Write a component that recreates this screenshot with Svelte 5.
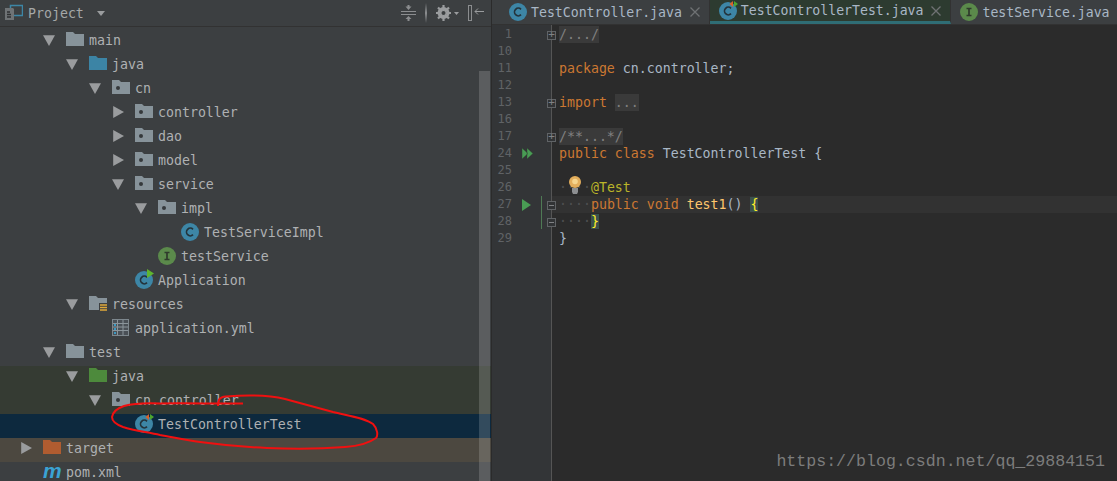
<script>
    const tree = [
        { depth: 1, arrow: 'down', icon: 'folder', label: 'main' },
        { depth: 2, arrow: 'down', icon: 'src', label: 'java' },
        { depth: 3, arrow: 'down', icon: 'pkg', label: 'cn' },
        { depth: 4, arrow: 'right', icon: 'pkg', label: 'controller' },
        { depth: 4, arrow: 'right', icon: 'pkg', label: 'dao' },
        { depth: 4, arrow: 'right', icon: 'pkg', label: 'model' },
        { depth: 4, arrow: 'down', icon: 'pkg', label: 'service' },
        { depth: 5, arrow: 'down', icon: 'pkg', label: 'impl' },
        { depth: 6, icon: 'class', label: 'TestServiceImpl' },
        { depth: 5, icon: 'iface', label: 'testService' },
        { depth: 4, icon: 'app', label: 'Application' },
        { depth: 2, arrow: 'down', icon: 'res', label: 'resources' },
        { depth: 3, icon: 'yml', label: 'application.yml' },
        { depth: 1, arrow: 'down', icon: 'folder', label: 'test' },
        { depth: 2, arrow: 'down', icon: 'testsrc', label: 'java', kind: 'tests' },
        { depth: 3, arrow: 'down', icon: 'pkg', label: 'cn.controller', kind: 'tests' },
        { depth: 4, icon: 'test', label: 'TestControllerTest', kind: 'selected' },
        { depth: 0, arrow: 'right', icon: 'target', label: 'target', kind: 'excluded' },
        { depth: 0, icon: 'pom', label: 'pom.xml' }
    ];

    const tabs = [
        { icon: 'class', name: 'TestController.java', close: true },
        { icon: 'test', name: 'TestControllerTest.java', close: true, active: true },
        { icon: 'iface', name: 'testService.java' }
    ];
</script>

{#snippet folderShape(color)}
    <path d="M0 1h7l2 2h9v12H0z" fill={color} />
{/snippet}

{#snippet classBadge(letter)}
    <circle cx="9" cy="9" r="9" fill={letter === 'I' ? '#5b8a4b' : '#3d86a6'} />
    {#if letter === 'I'}
        <path d="M6.5 5.5h5M6.5 12.5h5M9 5.5v7" stroke="#2f3a2c" stroke-width="1.7" fill="none" />
    {:else}
        <path d="M12 6.3a3.8 3.8 0 1 0 0 5.4" stroke="#24333b" stroke-width="1.7" fill="none" />
    {/if}
{/snippet}

{#snippet icon(name)}
    <svg class="icon" width="18" height="18" viewBox="0 0 18 18">
        {#if name === 'folder'}
            {@render folderShape('#87939a')}
        {:else if name === 'src'}
            {@render folderShape('#3c84a5')}
        {:else if name === 'testsrc'}
            {@render folderShape('#4d8a3c')}
        {:else if name === 'target'}
            {@render folderShape('#b05c30')}
        {:else if name === 'pkg'}
            {@render folderShape('#87939a')}
            <circle cx="6" cy="9" r="2" fill="#35393b" />
        {:else if name === 'res'}
            {@render folderShape('#87939a')}
            <rect x="10" y="8" width="9" height="10" fill="#3c3f41" />
            <path d="M11 10h7M11 12.5h7M11 15h7" stroke="#e0a93a" stroke-width="1.3" />
        {:else if name === 'class'}
            {@render classBadge('C')}
        {:else if name === 'iface'}
            {@render classBadge('I')}
        {:else if name === 'app'}
            {@render classBadge('C')}
            <path d="M12 -2l7 4.500-7 4.500z" fill="#5fb52f" />
        {:else if name === 'test'}
            {@render classBadge('C')}
            <path d="M14 -1v6l-3.500-3z" fill="#d9622b" />
            <path d="M15 -1v6l4-3z" fill="#4ea52f" />
        {:else if name === 'yml'}
            <rect x="0.5" y="0.5" width="16" height="16" fill="#4a5056" stroke="#7d878d" />
            <path d="M5.5 1v15M11 1v15M1 4.5h15M1 8h15M1 11.5h15" stroke="#8b959b" />
            <path d="M3 5v2M3 9v2M3 13v2" stroke="#3d9ac2" stroke-width="2" />
        {/if}
    </svg>
{/snippet}

<div class="ide">
    <aside class="project">
        <header class="project-bar">
            <svg class="project-icon" width="18" height="18" viewBox="0 0 18 18">
                <rect x="5.5" y="1.5" width="12" height="10" fill="none" stroke="#3d86a6" stroke-width="1.5" />
                <path d="M0 4h8l1 1v11H0z" fill="#6f7376" />
                <path d="M2 8h3M2 10.5h4M2 13h4" stroke="#2f3133" stroke-width="1.4" />
            </svg>
            <span class="project-title">Project</span>
            <svg class="caret" width="8" height="5" viewBox="0 0 8 5"><path d="M0 0h8L4 5z" fill="#9a9c9e" /></svg>
            <div class="bar-tools">
                <svg width="15" height="16" viewBox="0 0 15 16">
                    <path d="M0 6.5h15M0 9.5h15" stroke="#8b8d8f" />
                    <path d="M7.5 5l-3-3.5h2V0h2v1.500h2zM7.500 11l-3 3h2v2h2v-2h2z" fill="#8b8d8f" />
                </svg>
                <span class="tool-sep"></span>
                <svg width="24" height="16" viewBox="0 0 24 16">
                    <circle cx="7.500" cy="8" r="4.500" fill="none" stroke="#9a9c9e" stroke-width="3" />
                    <path d="M7.500 0v16M0 8h15M2 2.500l11 11M13 2.500L2 13.500" stroke="#9a9c9e" stroke-width="2.200" />
                    <circle cx="7.500" cy="8" r="2" fill="#3c3f41" />
                    <path d="M18 7h5l-2.500 3z" fill="#9a9c9e" />
                </svg>
                <svg width="16" height="16" viewBox="0 0 16 16">
                    <rect x="0.500" y="0.500" width="3" height="15" fill="none" stroke="#8b8d8f" />
                    <path d="M7 6.500h9M7 6.500l3-3M7 6.500l3 3" stroke="#9a9c9e" fill="none" />
                </svg>
            </div>
        </header>
        <ul class="tree">
            {#each tree as row}
                <li class="row {row.kind ?? ''}" style="padding-left: {20 + row.depth * 23}px">
                    <span class="arrow {row.arrow ?? ''}"></span>
                    {#if row.icon === 'pom'}
                        <span class="pom-m">m</span>
                    {:else}
                        {@render icon(row.icon)}
                    {/if}
                    <span class="label">{row.label}</span>
                </li>
            {/each}
        </ul>
        <div class="scrollbar"></div>
    </aside>

    <main class="editor">
        <nav class="tabs">
            {#each tabs as tab}
                <div class="tab" class:active={tab.active}>
                    {@render icon(tab.icon)}
                    <span class="tab-name">{tab.name}</span>
                    {#if tab.close}
                        <svg class="close" width="10" height="10" viewBox="0 0 10 10">
                            <path d="M0.500 0.500l9 9M9.500 0.500l-9 9" stroke="#6f7274" stroke-width="1.300" />
                        </svg>
                    {/if}
                </div>
            {/each}
        </nav>

        <div class="code">
            <div class="line"><span class="num">1</span><span class="mark"></span><span class="fold plus"></span><span class="text"><span class="folded dim">/.../</span></span></div>
            <div class="line"><span class="num">10</span><span class="mark"></span><span class="fold"></span><span class="text"></span></div>
            <div class="line"><span class="num">11</span><span class="mark"></span><span class="fold"></span><span class="text"><span class="kw">package</span> cn.controller;</span></div>
            <div class="line"><span class="num">12</span><span class="mark"></span><span class="fold"></span><span class="text"></span></div>
            <div class="line"><span class="num">13</span><span class="mark"></span><span class="fold plus"></span><span class="text"><span class="kw">import</span> <span class="folded dim">...</span></span></div>
            <div class="line"><span class="num">16</span><span class="mark"></span><span class="fold"></span><span class="text"></span></div>
            <div class="line"><span class="num">17</span><span class="mark"></span><span class="fold plus"></span><span class="text"><span class="folded dim">/**...*/</span></span></div>
            <div class="line">
                <span class="num">24</span>
                <span class="mark">
                    <svg width="11" height="11" viewBox="0 0 11 11"><path d="M0 0l6 5.500-6 5.500zM5 0l6 5.500-6 5.500z" fill="#499c54" stroke="#2f3a31" stroke-width="0.400" /></svg>
                </span>
                <span class="fold"></span>
                <span class="text"><span class="kw">public class</span> TestControllerTest {'{'}</span>
            </div>
            <div class="line"><span class="num">25</span><span class="mark"></span><span class="fold"></span><span class="text"></span></div>
            <div class="line">
                <span class="num">26</span><span class="mark"></span><span class="fold"></span>
                <span class="text"><span class="ws">····</span><span class="anno">@Test</span></span>
                <svg class="bulb" width="14" height="18" viewBox="0 0 14 18">
                    <circle cx="7" cy="6" r="6" fill="#e3ae5c" />
                    <circle cx="7" cy="5.500" r="2.800" fill="#f6d58e" />
                    <path d="M4 12h6v4l-1 2H5l-1-2z" fill="#8d8f91" />
                </svg>
            </div>
            <div class="line current">
                <span class="num">27</span>
                <span class="mark">
                    <svg width="10" height="12" viewBox="0 0 10 12"><path d="M0 0l9 6-9 6z" fill="#499c54" /></svg>
                </span>
                <span class="fold minus"></span>
                <span class="text"><span class="ws">····</span><span class="kw">public void</span> <span class="method">test1</span>() <span class="brace">{'{'}</span></span>
            </div>
            <div class="line">
                <span class="num">28</span><span class="mark"></span><span class="fold minus"></span>
                <span class="text"><span class="ws">····</span><span class="brace">{'}'}</span></span>
            </div>
            <div class="line"><span class="num">29</span><span class="mark"></span><span class="fold"></span><span class="text">{'}'}</span></div>
            <div class="change-bar"></div>
        </div>
    </main>

    <svg class="scribble" width="1117" height="481" viewBox="0 0 1117 481">
        <path d="M160 403.500C190 403 220 404 243 403.500M218 406C218 400 219 397 226 396.500C245 395 268 395 285 399C300 403 318 408 333 412C350 416 365 418 373 424C378 429 378 436 376 438C368 444 358 446 345 447C320 449 290 449 267 448C245 447 222 445 200 442C185 440 172 437 160 435C148 432 135 431 123 427C115 424 112 421 112 417C113 411 118 408 124 406C135 403 148 403 160 403.500" fill="none" stroke="#f01010" stroke-width="2" />
    </svg>
    <div class="watermark">https://blog.csdn.net/qq_29884151</div>
</div>

<style>
    :global(body) {
        margin: 0;
        background: #2b2b2b;
    }

    .ide {
        position: relative;
        display: flex;
        width: 1117px;
        height: 481px;
        overflow: hidden;
        font-family: "DejaVu Sans Mono", monospace;
        font-size: 13.25px;
        color: #a9b7c6;
    }

    /* project tool window */
    .project {
        position: relative;
        width: 491px;
        flex: none;
        background: #3c3f41;
        border-right: 1px solid #2b2b2b;
    }

    .project-bar {
        display: flex;
        align-items: center;
        height: 27px;
        padding-left: 5px;
        box-sizing: border-box;
        border-bottom: 1px solid #323232;
    }

    .project-icon {
        flex: none;
    }

    .project-title {
        margin-left: 5px;
        color: #a5a8a8;
    }

    .caret {
        margin-left: 13px;
    }

    .bar-tools {
        display: flex;
        align-items: center;
        gap: 8px;
        margin-left: auto;
        padding-right: 7px;
    }

    .tool-sep {
        width: 2px;
        height: 20px;
        margin: 0 1px;
        background: linear-gradient(#3c3f41, #8d8f91 50%, #3c3f41);
    }

    .tree {
        list-style: none;
        margin: 0;
        padding: 3px 0 0;
    }

    .row {
        display: flex;
        align-items: center;
        height: 24px;
        box-sizing: border-box;
        padding-bottom: 4px;
        color: #afb1b3;
    }

    .row.tests {
        background: #353b33;
    }

    .row.selected {
        background: #0d293e;
    }

    .row.excluded {
        background: #4c4840;
    }

    .arrow {
        flex: none;
        width: 12px;
        height: 12px;
        margin-right: 11px;
    }

    .arrow.down {
        background: #9a9c9e;
        clip-path: polygon(0 10%, 100% 10%, 50% 100%);
    }

    .arrow.right {
        background: #9a9c9e;
        clip-path: polygon(10% 0, 100% 50%, 10% 100%);
    }

    .icon {
        flex: none;
        overflow: visible;
    }

    .label {
        margin-left: 5px;
        padding-top: 1px;
    }

    .pom-m {
        width: 18px;
        height: 18px;
        font-family: "Liberation Sans", sans-serif;
        font-size: 21px;
        font-style: italic;
        font-weight: bold;
        line-height: 15px;
        color: #3aa3d4;
    }

    .scrollbar {
        position: absolute;
        top: 71px;
        right: 1px;
        bottom: 0;
        width: 11px;
        background: rgba(255, 255, 255, 0.16);
    }

    /* editor */
    .editor {
        flex: 1;
        min-width: 0;
        background: #2b2b2b;
    }

    .tabs {
        display: flex;
        height: 25px;
        box-sizing: border-box;
        background: #3c3f41;
        border-bottom: 1px solid #323232;
        font-size: 13.2px;
    }

    .tab {
        display: flex;
        align-items: center;
        flex: none;
        height: 24px;
        box-sizing: border-box;
        padding: 0 9px 0 17px;
        border-right: 1px solid #323232;
        color: #a9b7c6;
    }

    .tab.active {
        padding-left: 9px;
        background: #2d3b30;
        border-bottom: 3px solid #2f6d75;
    }

    .tab:last-child {
        padding-left: 9px;
        border-right: none;
    }

    .tab-name {
        margin-left: 4px;
    }

    .close {
        margin-left: 8px;
    }

    .code {
        position: relative;
        padding-top: 1px;
        background: linear-gradient(90deg, #333537 59px, #555 59px, #555 60px, #2b2b2b 60px);
        height: 456px;
    }

    .line {
        position: relative;
        display: flex;
        align-items: center;
        height: 17px;
        line-height: 17px;
    }

    .line.current {
        background: linear-gradient(90deg, transparent 60px, #323232 60px);
    }

    .num {
        flex: none;
        width: 20px;
        font-size: 12px;
        text-align: right;
        color: #606366;
    }

    .mark {
        display: flex;
        align-items: center;
        justify-content: center;
        flex: none;
        width: 30px;
    }

    .fold {
        position: relative;
        flex: none;
        width: 17px;
    }

    .fold.plus::before,
    .fold.minus::before {
        content: "";
        position: absolute;
        top: -4px;
        left: 5px;
        width: 7px;
        height: 7px;
        background: #313335;
        border: 1px solid #606366;
    }

    .fold.plus::after {
        content: "+";
        position: absolute;
        top: -9px;
        left: 5px;
        width: 9px;
        font-size: 11px;
        line-height: 17px;
        text-align: center;
        color: #808285;
    }

    .fold.minus::after {
        content: "";
        position: absolute;
        top: 0;
        left: 7px;
        width: 5px;
        height: 1px;
        background: #808285;
    }

    .text {
        flex: 1;
        height: 17px;
        white-space: pre;
        color: #a9b7c6;
    }

    .kw {
        color: #cc7832;
    }

    .anno {
        color: #bbb529;
    }

    .method {
        color: #ffc66d;
    }

    .ws {
        color: #4d4f50;
    }

    .folded {
        display: inline-block;
        height: 17px;
        background: #3a3a3a;
    }

    .dim {
        color: #808080;
    }

    .brace {
        background: #3b514d;
        color: #ffef28;
    }

    .bulb {
        position: absolute;
        top: -3px;
        left: 76px;
    }

    .change-bar {
        position: absolute;
        top: 171px;
        left: 49px;
        width: 1px;
        height: 33px;
        background: #4f7a55;
    }

    .scribble {
        position: absolute;
        inset: 0;
        pointer-events: none;
    }

    .watermark {
        position: absolute;
        right: 12px;
        bottom: 10px;
        font-family: "Liberation Mono", monospace;
        font-size: 16.6px;
        color: #7c7c7c;
    }
</style>
